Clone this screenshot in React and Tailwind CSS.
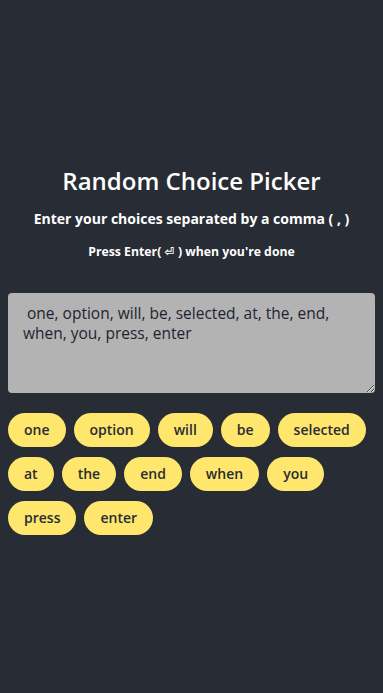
import React, { useEffect, useRef } from "react";

const text = " one, option, will, be, selected, at, the, end, when, you, press, enter";

const App = () => {
  const areaRef = useRef(null);
  const tags = text
    .split(",")
    .map((t) => t.trim())
    .filter((t) => t !== "");

  useEffect(() => {
    const el = areaRef.current;
    if (el) {
      el.focus();
      el.setSelectionRange(text.length, text.length);
    }
  }, []);

  return (
    <div
      className="min-h-screen bg-[#282c34] flex flex-col justify-center px-2 pt-[6px]"
      style={{ fontFamily: '"Open Sans", Lato, sans-serif' }}
    >
      <div className="w-full">
        {/* Heading */}
        <h1 className="text-center text-white text-[24px] leading-8 font-semibold">
          Random Choice Picker
        </h1>
        <p className="mt-3 text-center text-white text-[14px] leading-5 font-bold">
          Enter your choices separated by a comma ( , )
        </p>
        <p className="mt-[14px] text-center text-white text-[12.25px] leading-[18px] font-bold">
          Press Enter({" "}
          <span style={{ fontFamily: '"DejaVu Sans", sans-serif' }}>⏎</span>
          {" "}) when you're done
        </p>

        {/* Input */}
        <textarea
          ref={areaRef}
          defaultValue={text}
          className="mt-8 block w-full h-[100px] bg-[#b3b3b3] text-[#1f2330] caret-[#1f2330] rounded-[4px] py-[10px] px-[15px] text-[15.5px] leading-5 outline-none"
          style={{ fontFamily: '"Open Sans", Lato, sans-serif' }}
        />

        {/* Tags */}
        <div className="mt-5 flex flex-wrap gap-x-2 gap-y-[10px]">
          {tags.map((tag) => (
            <span
              key={tag}
              className="bg-[#ffe66d] text-[#282c34] rounded-full px-4 py-2 text-[14px] leading-[18px] font-semibold"
            >
              {tag}
            </span>
          ))}
        </div>
      </div>
    </div>
  );
};

export default App;
